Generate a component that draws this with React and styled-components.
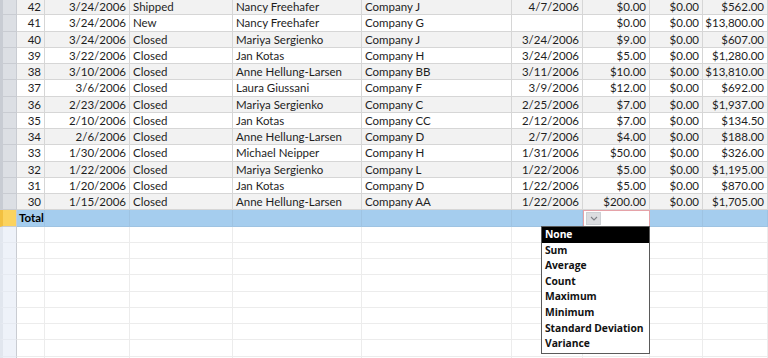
import React from 'react'
import styled, { createGlobalStyle } from 'styled-components'

const Global = createGlobalStyle`
  html, body {
    margin: 0;
    padding: 0;
    background: #ffffff;
    overflow: hidden;
  }
`;

const COLS = '17px 28px 85px 103px 129px 150px 71px 67px 53px 65px';

const Sheet = styled.div`
  position: relative;
  width: 768px;
  height: 358px;
  overflow: hidden;
  font-family: Lato, "Open Sans", sans-serif;
  font-size: 11.5px;
  color: #1e1e1e;
`;

const Rows = styled.div`
  display: flex;
  flex-direction: column;
  margin-top: -1px;
`;

const Row = styled.div`
  display: grid;
  grid-template-columns: ${COLS};
  height: 16.25px;
  box-sizing: border-box;
  background: ${p => p.$bg};
`;

const Selector = styled.div`
  background: ${p => p.$bg};
  border-left: 3px solid ${p => p.$edge};
  border-right: 1px solid #c9ccd2;
  border-bottom: 1px solid ${p => p.$line};
  box-sizing: border-box;
`;

const Cell = styled.div`
  display: flex;
  align-items: center;
  justify-content: ${p => (p.$right ? 'flex-end' : 'flex-start')};
  padding: 0 ${p => (p.$right ? '3px' : '0')} 0 ${p => (p.$right ? '0' : p.$bold ? '2px' : '3px')};
  border-right: 1px solid ${p => p.$line};
  border-bottom: 1px solid ${p => p.$line};
  box-sizing: border-box;
  white-space: nowrap;
  overflow: ${p => (p.$bold ? 'visible' : 'hidden')};
  font-weight: ${p => (p.$bold ? 700 : 400)};
  color: ${p => (p.$bold ? '#000' : 'inherit')};
`;

const TotalField = styled.div`
  display: flex;
  align-items: center;
  padding-left: 2px;
  background: #ffffff;
  border: 1px solid #e5a2a8;
  box-sizing: border-box;
`;

const DropButton = styled.div`
  width: 15px;
  height: 13px;
  display: flex;
  align-items: center;
  justify-content: center;
  background: #dcdde0;
  border: 1px solid #cdd0d4;
  box-sizing: border-box;
`;

const List = styled.ul`
  position: absolute;
  left: 541px;
  top: 226px;
  width: 109px;
  margin: 0;
  padding: 0 0 1px 0;
  list-style: none;
  background: #ffffff;
  border: 1px solid #5a5a5a;
  box-sizing: border-box;
  font-family: "Open Sans", "DejaVu Sans", sans-serif;
  font-weight: 700;
  font-size: 10.3px;
`;

const Option = styled.li`
  height: 15.6px;
  line-height: 15.6px;
  padding-left: 3px;
  background: ${p => (p.$active ? '#000' : 'transparent')};
  color: ${p => (p.$active ? '#fff' : '#111')};
  letter-spacing: -0.05px;
`;

const orders = [
  [42, '3/24/2006', 'Shipped', 'Nancy Freehafer', 'Company J', '4/7/2006', '$0.00', '$0.00', '$562.00'],
  [41, '3/24/2006', 'New', 'Nancy Freehafer', 'Company G', '', '$0.00', '$0.00', '$13,800.00'],
  [40, '3/24/2006', 'Closed', 'Mariya Sergienko', 'Company J', '3/24/2006', '$9.00', '$0.00', '$607.00'],
  [39, '3/22/2006', 'Closed', 'Jan Kotas', 'Company H', '3/24/2006', '$5.00', '$0.00', '$1,280.00'],
  [38, '3/10/2006', 'Closed', 'Anne Hellung-Larsen', 'Company BB', '3/11/2006', '$10.00', '$0.00', '$13,810.00'],
  [37, '3/6/2006', 'Closed', 'Laura Giussani', 'Company F', '3/9/2006', '$12.00', '$0.00', '$692.00'],
  [36, '2/23/2006', 'Closed', 'Mariya Sergienko', 'Company C', '2/25/2006', '$7.00', '$0.00', '$1,937.00'],
  [35, '2/10/2006', 'Closed', 'Jan Kotas', 'Company CC', '2/12/2006', '$7.00', '$0.00', '$134.50'],
  [34, '2/6/2006', 'Closed', 'Anne Hellung-Larsen', 'Company D', '2/7/2006', '$4.00', '$0.00', '$188.00'],
  [33, '1/30/2006', 'Closed', 'Michael Neipper', 'Company H', '1/31/2006', '$50.00', '$0.00', '$326.00'],
  [32, '1/22/2006', 'Closed', 'Mariya Sergienko', 'Company L', '1/22/2006', '$5.00', '$0.00', '$1,195.00'],
  [31, '1/20/2006', 'Closed', 'Jan Kotas', 'Company D', '1/22/2006', '$5.00', '$0.00', '$870.00'],
  [30, '1/15/2006', 'Closed', 'Anne Hellung-Larsen', 'Company AA', '1/22/2006', '$200.00', '$0.00', '$1,705.00'],
]

const rightCols = [true, true, false, false, false, true, true, true, true]
const options = ['None', 'Sum', 'Average', 'Count', 'Maximum', 'Minimum', 'Standard Deviation', 'Variance']

const Chevron = () => (
  <svg width="8" height="5" viewBox="0 0 8 5">
    <path d="M1 1 L4 4 L7 1" fill="none" stroke="#7e8186" strokeWidth="1.1" />
  </svg>
)

const App = () => {
  return (
    <Sheet>
      <Global />
      <Rows>
        {orders.map((order, i) => {
          const bg = i % 2 === 0 ? '#f2f2f2' : '#ffffff'
          return (
            <Row key={order[0]} $bg={bg}>
              <Selector $bg="#dcdfe4" $edge="#c8ccd3" $line="#c9ccd2" />
              {order.map((value, j) => (
                <Cell key={j} $right={rightCols[j]} $line="#d6d6d6">{value}</Cell>
              ))}
            </Row>
          )
        })}

        <Row $bg="#a5cdee">
          <Selector $bg="#fbd35f" $edge="#f2c040" $line="#c9ccd2" />
          <Cell $bold $line="#9ec3e2">Total</Cell>
          <Cell $line="#9ec3e2" />
          <Cell $line="#9ec3e2" />
          <Cell $line="#9ec3e2" />
          <Cell $line="#9ec3e2" />
          <Cell $line="#9ec3e2" />
          <TotalField>
            <DropButton><Chevron /></DropButton>
          </TotalField>
          <Cell $line="#9ec3e2" />
          <Cell $line="#9ec3e2" />
        </Row>

        {Array.from({ length: 9 }).map((_, i) => (
          <Row key={'e' + i} $bg="#ffffff">
            <Selector $bg="#eef2f9" $edge="#e1e6ee" $line="#e6eaf1" />
            {rightCols.map((r, j) => (
              <Cell key={j} $line="#ececec" />
            ))}
          </Row>
        ))}
      </Rows>

      <List>
        {options.map((o, i) => (
          <Option key={o} $active={i === 0}>{o}</Option>
        ))}
      </List>
    </Sheet>
  )
}

export default App
